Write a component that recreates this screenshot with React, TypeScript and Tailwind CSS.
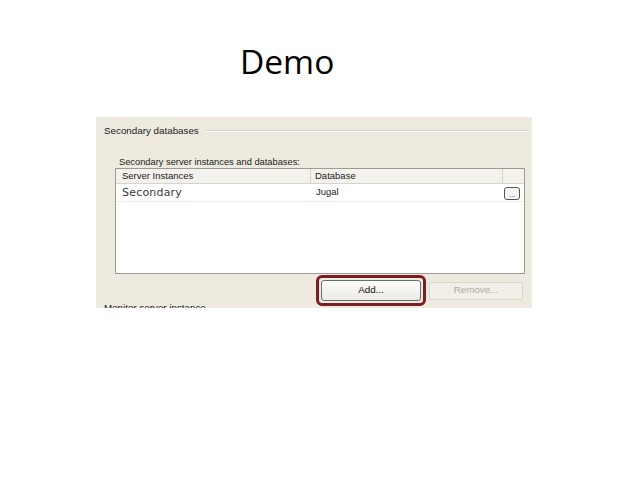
import React from "react";

const tahoma = { fontFamily: '"Liberation Sans", Arial, sans-serif' };

export default function App() {
  return (
    <div className="w-[638px] h-[478px] bg-white relative overflow-hidden">
      <div className="h-[117px] pl-[240px] pt-[41px]">
        <div className="text-[33.5px] leading-[40px] text-black" style={{ fontFamily: '"Open Sans", sans-serif' }}>
          Demo
        </div>
      </div>
      <div className="ml-[96px] w-[436px] h-[191px] bg-[#eeeadf] overflow-hidden relative" style={tahoma}>
        {/* group header */}
        <div className="flex items-center pl-[8px] pr-[4px] pt-[8px] h-[20px]">
          <span className="text-[9.8px] text-[#222] leading-none whitespace-nowrap">Secondary databases</span>
          <div className="flex-1 ml-[7px] h-[2px] border-t border-[#d3cfc0] border-b border-b-white" />
        </div>
        <div className="pl-[23px] pt-[19px] text-[9.3px] leading-[12px] text-[#222]">
          Secondary server instances and databases:
        </div>
        {/* list */}
        <div className="ml-[19px] w-[410px] h-[106px] bg-white border border-[#9c9c94] flex flex-col">
          <div className="flex h-[15px] bg-[#f3f2ec] border-b border-[#d8d5c8] text-[9.5px] leading-[14px] text-[#222]">
            <div className="w-[195px] pl-[6px] border-r border-[#d8d5c8]">Server Instances</div>
            <div className="w-[192px] pl-[4px] border-r border-[#d8d5c8]">Database</div>
            <div className="flex-1" />
          </div>
          <div className="flex h-[18px] border-b border-[#ececec] items-center">
            <div
              className="w-[195px] pl-[6px] pt-[2px] text-[11px] text-[#3a3a3a] tracking-[0.2px]"
              style={{ fontFamily: '"DejaVu Sans", sans-serif' }}
            >
              Secondary
            </div>
            <div className="w-[192px] pl-[5px] text-[9.5px] text-[#222]">Jugal</div>
            <div className="flex-1 flex justify-end pr-[4px] pt-[2px]">
              <div className="w-[16px] h-[13px] rounded-[3px] border border-[#555] bg-[#f6f6f4] flex items-end justify-center text-[8px] leading-[9px] text-[#333]">
                ...
              </div>
            </div>
          </div>
        </div>
        {/* buttons */}
        <div className="flex items-center pl-[220px] pt-[1px] h-[32px]">
          <div className="w-[110px] h-[31px] rounded-[6px] border-[3px] border-[#7a1e24] flex items-center justify-center">
            <div className="w-[100px] h-[21px] rounded-[3px] border border-[#5f7470] bg-gradient-to-b from-[#fdfdfb] to-[#ebeae4] flex items-center justify-center text-[9.8px] text-[#111]">
              Add...
            </div>
          </div>
          <div className="ml-[3px] w-[94px] h-[18px] rounded-[2px] border border-[#d8d5c9] bg-[#f1efe7] flex items-center justify-center text-[9.8px] text-[#b0ad9f]">
            Remove...
          </div>
        </div>
        <div className="pl-[8px] text-[9.8px] leading-[12px] text-[#222] -mt-[4px]">Monitor server instance</div>
      </div>
    </div>
  );
}
